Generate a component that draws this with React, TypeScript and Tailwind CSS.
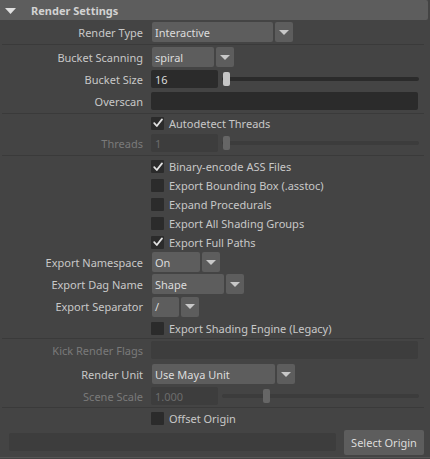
import React from 'react';

const FONT = { fontFamily: '"Noto Sans", "Open Sans", Arial, sans-serif' };

function Arrow() {
  return (
    <svg width="10" height="6" viewBox="0 0 10 6">
      <path d="M0 0 L10 0 L5 5 Z" fill="#c8c8c8" />
    </svg>
  );
}

function Check() {
  return (
    <svg width="12" height="12" viewBox="0 0 12 12">
      <path d="M2.2 6.2 L4.8 9 L10 2.4" stroke="#e2e2e2" strokeWidth="1.8" fill="none" strokeLinecap="round" strokeLinejoin="round" />
    </svg>
  );
}

function Label({ text, dim = false }: { text: string; dim?: boolean }) {
  return (
    <div className={`w-[143px] shrink-0 text-right ${dim ? 'text-[#7a7a7a]' : 'text-[#c8c8c8]'}`}>{text}</div>
  );
}

function Row({ h = 22, children }: { h?: number; children: React.ReactNode }) {
  return (
    <div className="flex items-center gap-[8px]" style={{ height: h }}>
      {children}
    </div>
  );
}

function Dropdown({ value, w }: { value: string; w: number }) {
  return (
    <div className="flex gap-[2px] h-[20px] ml-[1px]">
      <div className="bg-[#5d5d5d] rounded-[2px] flex items-center pl-[3px] text-[#dcdcdc]" style={{ width: w }}>{value}</div>
      <div className="bg-[#5d5d5d] rounded-[2px] w-[18px] flex items-center justify-center pt-[1px]">
        <Arrow />
      </div>
    </div>
  );
}

function Slider({ pos, dim = false, value }: { pos: number; dim?: boolean; value: string }) {
  return (
    <div className="flex items-center flex-1 pr-[11px]">
      <div className={`w-[67px] h-[18px] rounded-[2px] flex items-center pl-[4px] ${dim ? 'bg-[#3d3d3d] text-[#6c6c6c]' : 'bg-[#2b2b2b] text-[#dcdcdc]'}`}>{value}</div>
      <div className="relative flex-1 ml-[4px] h-[14px] flex items-center">
        <div className={`w-full h-[4px] rounded-full ${dim ? 'bg-[#3c3c3c]' : 'bg-[#2b2b2b]'}`} />
        <div className={`absolute top-0 w-[7px] h-[14px] rounded-[2px] ${dim ? 'bg-[#666666]' : 'bg-[#c6c6c6]'}`} style={{ left: pos }} />
      </div>
    </div>
  );
}

function CheckRow({ text, checked, h = 19 }: { text: string; checked: boolean; h?: number }) {
  return (
    <div className="flex items-center" style={{ height: h }}>
      <div className="w-[151px] shrink-0" />
      <div className="w-[13px] h-[13px] bg-[#2b2b2b] rounded-[1px] flex items-center justify-center">
        {checked && <Check />}
      </div>
      <div className="ml-[5px] text-[#c8c8c8]">{text}</div>
    </div>
  );
}

function Sep({ h = 3 }: { h?: number }) {
  return (
    <div className="flex items-center pl-[2px] pr-[6px]" style={{ height: h }}>
      <div className="w-full h-[1px] bg-[#3a3a3a]" />
    </div>
  );
}

export default function App() {
  return (
    <div className="w-[430px] h-[459px] bg-[#444444] text-[11px] leading-none overflow-hidden" style={FONT}>
      {/* header */}
      <div className="h-[20px] w-[428px] bg-[#5d5d5d] rounded-r-[2px] flex items-center">
        <div className="w-[31px] flex justify-center pr-[10px] pt-[1px]">
          <svg width="11" height="6" viewBox="0 0 11 6">
            <path d="M0 0 L11 0 L5.5 6 Z" fill="#e0e0e0" />
          </svg>
        </div>
        <div className="font-bold text-[#d2d2d2] text-[11px]">Render Settings</div>
      </div>

      <div className="h-[1px]" />
      <Row>
        <Label text="Render Type" />
        <Dropdown value="Interactive" w={121} />
      </Row>
      <Sep />
      <Row>
        <Label text="Bucket Scanning" />
        <Dropdown value="spiral" w={62} />
      </Row>
      <Row>
        <Label text="Bucket Size" />
        <Slider value="16" pos={1} />
      </Row>
      <Row>
        <Label text="Overscan" />
        <div className="flex-1 mr-[12px] h-[18px] bg-[#2b2b2b] rounded-[2px]" />
      </Row>
      <Sep h={2} />
      <CheckRow text="Autodetect Threads" checked h={18} />
      <Row>
        <Label text="Threads" dim />
        <Slider value="1" pos={1} dim />
      </Row>
      <Sep h={3} />
      <CheckRow text="Binary-encode ASS Files" checked />
      <CheckRow text="Export Bounding Box (.asstoc)" checked={false} />
      <CheckRow text="Expand Procedurals" checked={false} />
      <CheckRow text="Export All Shading Groups" checked={false} />
      <CheckRow text="Export Full Paths" checked h={18} />
      <Row>
        <Label text="Export Namespace" />
        <Dropdown value="On" w={48} />
      </Row>
      <Row>
        <Label text="Export Dag Name" />
        <Dropdown value="Shape" w={72} />
      </Row>
      <Row h={23}>
        <Label text="Export Separator" />
        <Dropdown value="/" w={27} />
      </Row>
      <CheckRow text="Export Shading Engine (Legacy)" checked={false} h={20} />
      <Sep h={1} />
      <Row>
        <Label text="Kick Render Flags" dim />
        <div className="flex-1 mr-[12px] h-[18px] bg-[#3d3d3d] rounded-[2px]" />
      </Row>
      <div className="h-[2px]" />
      <Row>
        <Label text="Render Unit" />
        <Dropdown value="Use Maya Unit" w={123} />
      </Row>
      <Row>
        <Label text="Scene Scale" dim />
        <Slider value="1.000" pos={41} dim />
      </Row>
      <Sep h={1} />
      <CheckRow text="Offset Origin" checked={false} h={21} />
      <div className="h-[26px] flex items-center">
        <div className="ml-[9px] w-[327px] h-[18px] bg-[#3d3d3d] rounded-[2px]" />
        <div className="ml-[8px] w-[80px] h-[25px] bg-[#5d5d5d] rounded-[2px] flex items-center justify-center text-[#dcdcdc]">Select Origin</div>
      </div>
      <div className="h-[2px]" />
      <div className="h-[1px] bg-[#555555]" />
    </div>
  );
}
